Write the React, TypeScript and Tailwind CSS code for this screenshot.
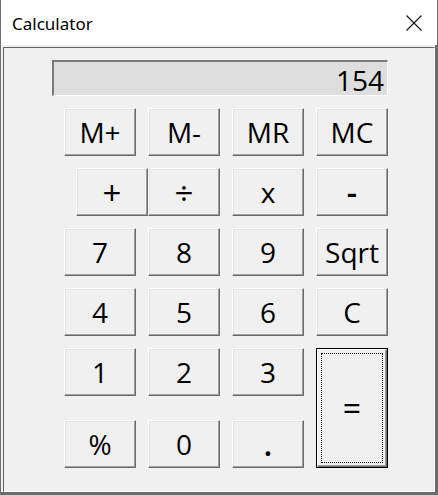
import React from 'react';

const face = "font-['Open_Sans','Noto_Sans',sans-serif] leading-none text-black";

const Key = ({ label, className = '', size = 'text-[28px]' }: { label: string; className?: string; size?: string }) => (
  <button
    className={`h-[48px] w-[72px] flex items-center justify-center bg-[#f0f0f0] border-t border-l border-white border-r border-b border-r-[#696969] border-b-[#696969] shadow-[inset_-1px_-1px_0_#a0a0a0,inset_1px_1px_0_#e3e3e3] ${face} ${size} ${className}`}
  >
    {label}
  </button>
);

export default function App() {
  return (
    <div className="w-[438px] h-[495px] flex flex-col bg-[#f0f0f0] border-l border-r border-b border-[#6e6e6e]">
      {/* title bar */}
      <div className="h-[45px] shrink-0 flex items-center justify-between bg-white pl-[11px] pr-[15px]">
        <span className="pt-[2px] font-['Noto_Sans','Open_Sans',sans-serif] text-[17px] text-black">Calculator</span>
        <svg width="16" height="16" viewBox="0 0 16 16" className="mt-[1px]">
          <path d="M0.5 0.5L15.5 15.5M15.5 0.5L0.5 15.5" stroke="#111" strokeWidth="1.1" fill="none" />
        </svg>
      </div>

      {/* client area */}
      <div className="flex-1 flex pl-[2px] pt-[2px] border-r-2 border-b-2 border-[#6b6b6b]">
        <div className="flex-1 flex flex-col border-t border-l border-[#646464] border-r border-b border-r-white border-b-white">
          {/* display */}
          <div className="ml-12 mt-3 w-[336px] h-[36px] flex items-center justify-end pr-[3px] pt-[3px] bg-[#dedede] border-t-2 border-l-2 border-[#7a7a7a] border-r border-b border-r-white border-b-white">
            <span className={`${face} text-[28px]`}>154</span>
          </div>

          {/* keypad */}
          <div className="ml-15 mt-3 grid grid-cols-[repeat(4,72px)] grid-rows-[48px_48px_48px_48px_48px_0px_48px] gap-x-3 gap-y-3">
            <Key label="M+" />
            <Key label="M-" />
            <Key label="MR" />
            <Key label="MC" />

            <div className="col-span-4 flex pl-3">
              <Key label="+" size="text-[33px]" />
              <Key label="÷" size="text-[33px]" />
              <Key label="x" className="ml-3" />
              <Key label="-" size="text-[32px] font-semibold" className="ml-3" />
            </div>

            <Key label="7" />
            <Key label="8" />
            <Key label="9" />
            <Key label="Sqrt" />

            <Key label="4" />
            <Key label="5" />
            <Key label="6" />
            <Key label="C" />

            <Key label="1" />
            <Key label="2" />
            <Key label="3" />
            <div className="row-span-3 border border-black">
              <button
                className={`w-full h-full flex items-center justify-center bg-[#f0f0f0] border-t border-l border-white border-r border-b border-r-[#696969] border-b-[#696969] shadow-[inset_-1px_-1px_0_#a0a0a0] outline-1 outline-dotted outline-black outline-offset-[-5px] text-[32px] ${face}`}
              >
                =
              </button>
            </div>

            <Key label="%" className="row-start-7" />
            <Key label="0" className="row-start-7" />
            <Key label="." size="text-[32px] font-semibold" className="row-start-7" />
          </div>
        </div>
      </div>
    </div>
  );
}
